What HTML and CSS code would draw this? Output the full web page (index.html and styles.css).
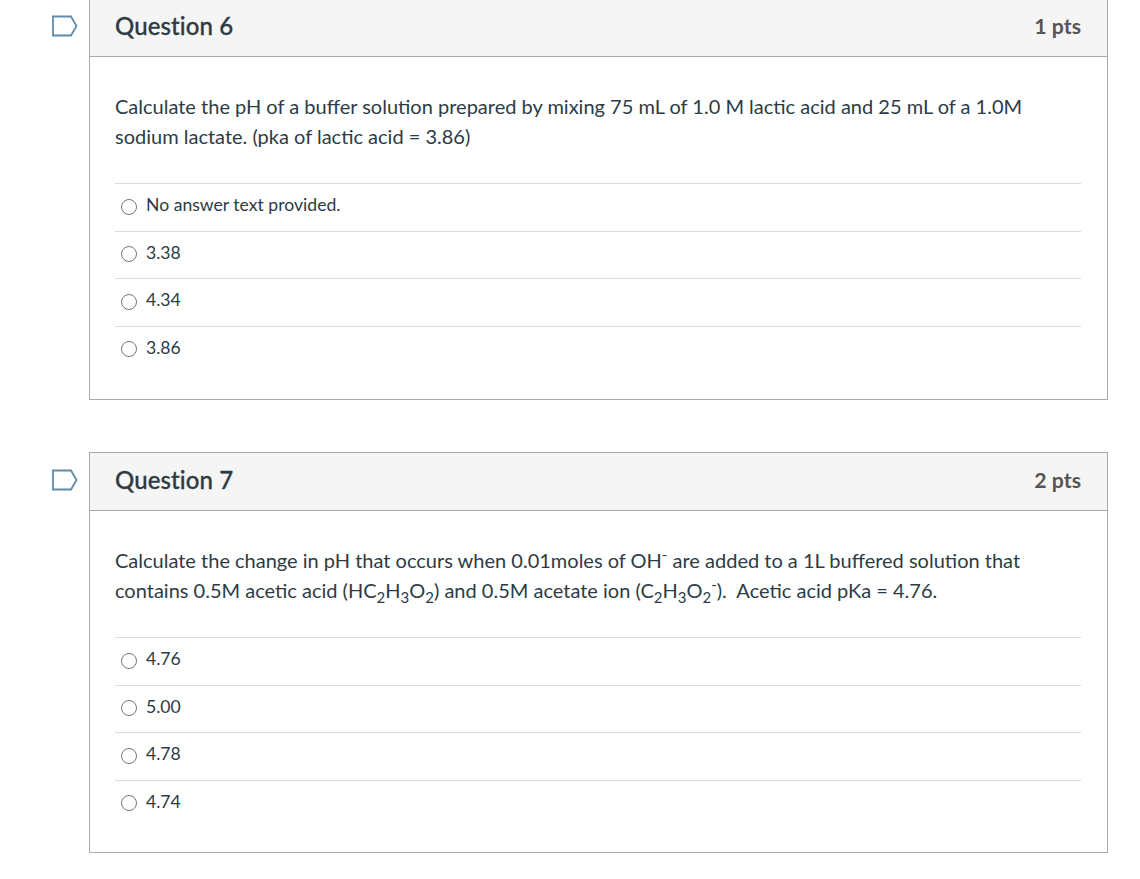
FILE: index.html
```html
<!DOCTYPE html>
<html lang="en">
<head>
<meta charset="utf-8">
<title>Quiz</title>
<link rel="stylesheet" href="styles.css">
</head>
<body>
<main class="quiz">
  <section class="question">
    <svg class="flag" width="26" height="22" viewBox="0 0 26 22"><path d="M1 1.500H19L24.500 11L19 20.500H1Z" fill="#fff" stroke="#5f8cab" stroke-width="1.800"/></svg>
    <header class="q-head"><h2 class="q-title">Question 6</h2><span class="q-pts">1 pts</span></header>
    <div class="q-body">
      <p class="q-text">Calculate the pH of a buffer solution prepared by mixing 75 mL of 1.0 M lactic acid and 25 mL of a 1.0M sodium lactate. (pka of lactic acid = 3.86)</p>
      <ul class="answers">
        <li class="answer"><span class="radio"></span><span class="answer-text">No answer text provided.</span></li>
        <li class="answer"><span class="radio"></span><span class="answer-text">3.38</span></li>
        <li class="answer"><span class="radio"></span><span class="answer-text">4.34</span></li>
        <li class="answer"><span class="radio"></span><span class="answer-text">3.86</span></li>
      </ul>
    </div>
  </section>
  <section class="question">
    <svg class="flag" width="26" height="22" viewBox="0 0 26 22"><path d="M1 1.500H19L24.500 11L19 20.500H1Z" fill="#fff" stroke="#5f8cab" stroke-width="1.800"/></svg>
    <header class="q-head"><h2 class="q-title">Question 7</h2><span class="q-pts">2 pts</span></header>
    <div class="q-body">
      <p class="q-text">Calculate the change in pH that occurs when 0.01moles of OH<sup>-</sup> are added to a 1L buffered solution that contains 0.5M acetic acid (HC<sub>2</sub>H<sub>3</sub>O<sub>2</sub>) and 0.5M acetate ion (C<sub>2</sub>H<sub>3</sub>O<sub>2</sub><sup>-</sup>).&nbsp; Acetic acid pKa = 4.76.</p>
      <ul class="answers">
        <li class="answer"><span class="radio"></span><span class="answer-text">4.76</span></li>
        <li class="answer"><span class="radio"></span><span class="answer-text">5.00</span></li>
        <li class="answer"><span class="radio"></span><span class="answer-text">4.78</span></li>
        <li class="answer"><span class="radio"></span><span class="answer-text">4.74</span></li>
      </ul>
    </div>
  </section>
</main>
</body>
</html>
```
FILE: styles.css
```css
html, body {
  margin: 0;
  padding: 0;
  background: #fff;
  overflow: hidden;
}
body {
  font-family: Lato, "Liberation Sans", sans-serif;
  color: #2d3b45;
}
.quiz {
  display: flex;
  flex-direction: column;
  gap: 52.400px;
  margin: -1.600px 32px 0 89px;
}
.question {
  position: relative;
  border: 1px solid #aaaaaa;
}
.flag {
  position: absolute;
  left: -38px;
  top: 15.600px;
}
.q-head {
  display: flex;
  justify-content: space-between;
  align-items: center;
  height: 55px;
  padding: 0 26px 2px 25px;
  background: #f5f5f5;
  border-bottom: 1px solid #aaaaaa;
}
.q-title {
  margin: 0 0 2px;
  font-size: 24px;
  font-weight: 500;
  line-height: 29px;
  letter-spacing: 0.1px;
  -webkit-text-stroke: 0.3px #2d3b45;
}
.q-pts {
  font-size: 21.300px;
  font-weight: 700;
  line-height: 26px;
  color: #555;
  margin-bottom: 2px;
}
.q-body {
  padding: 34px 26px 25.300px 25px;
}
.q-text {
  margin: 0 0 32px;
  font-size: 20px;
  line-height: 30px;
}
.q-text sub, .q-text sup {
  font-size: 15px;
  line-height: 0;
}
.answers {
  list-style: none;
  margin: 0;
  padding: 0;
}
.answer {
  display: flex;
  align-items: center;
  gap: 9px;
  height: 47.500px;
  box-sizing: border-box;
  padding-left: 6px;
  border-top: 1px solid #dcdcdc;
  font-size: 17.600px;
  line-height: 22px;
}
.answer-text {
  margin-bottom: 4.500px;
}
.radio {
  width: 16px;
  height: 16px;
  box-sizing: border-box;
  border: 1.500px solid #767676;
  border-radius: 50%;
  background: #fff;
  margin-bottom: 1.700px;
}
```
